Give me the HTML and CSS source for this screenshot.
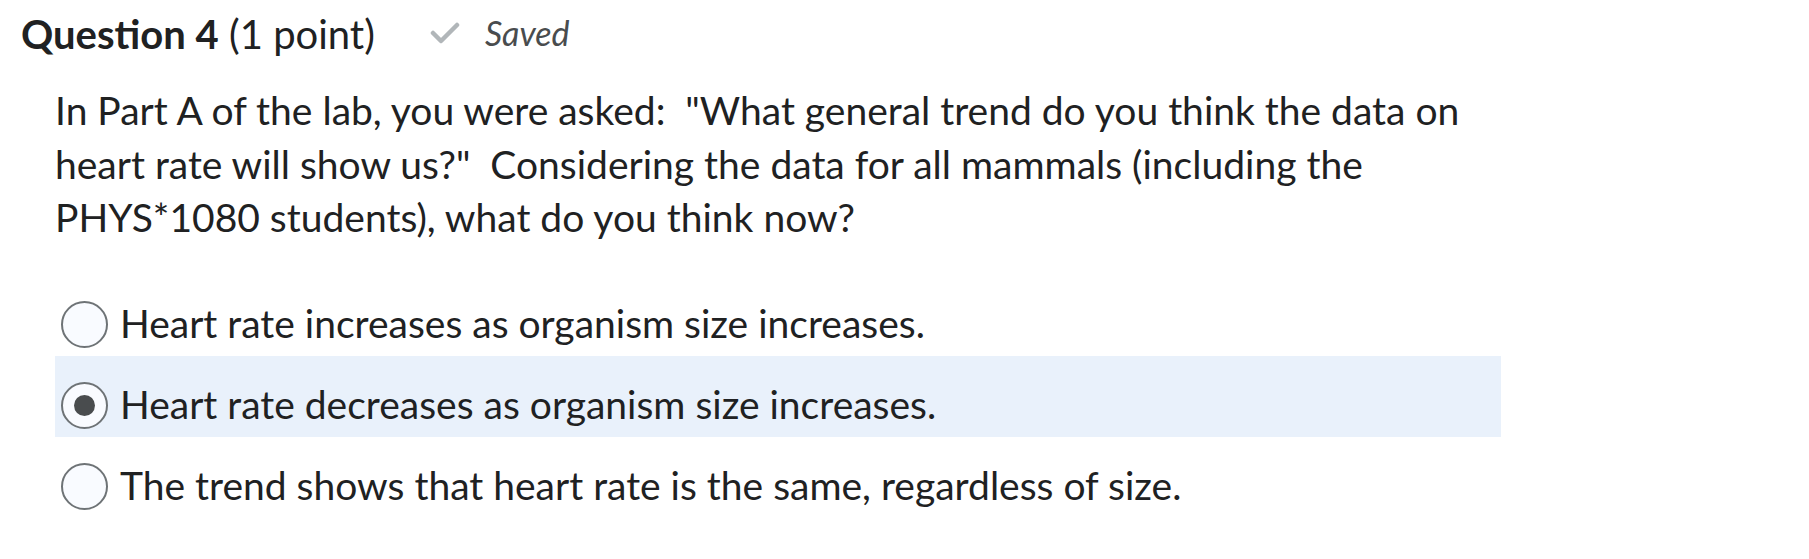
FILE: index.html
```html
<!DOCTYPE html>
<html lang="en">
<head>
<meta charset="utf-8">
<title>Question 4</title>
<link rel="stylesheet" href="styles.css">
</head>
<body>
<div class="question">
  <div class="header">
    <h2 class="title"><strong>Question 4</strong> (1 point)</h2>
    <svg class="check" width="30" height="22" viewBox="0 0 30 22" aria-hidden="true">
      <polyline points="3,11 11,19 27,3" fill="none" stroke="#b1b6b9" stroke-width="4.5" stroke-linecap="round" stroke-linejoin="round"/>
    </svg>
    <span class="saved">Saved</span>
  </div>
  <div class="body">
    <p class="prompt">In Part A of the lab, you were asked:&nbsp; "What general trend do you think the data on heart rate will show us?"&nbsp; Considering the data for all mammals (including the PHYS*1080 students), what do you think now?</p>
    <div class="options">
      <label class="option">
        <span class="radio"></span>
        <span class="label">Heart rate increases as organism size increases.</span>
      </label>
      <label class="option selected">
        <span class="radio checked"></span>
        <span class="label">Heart rate decreases as organism size increases.</span>
      </label>
      <label class="option">
        <span class="radio"></span>
        <span class="label">The trend shows that heart rate is the same, regardless of size.</span>
      </label>
    </div>
  </div>
</div>
</body>
</html>
```
FILE: styles.css
```css
* { box-sizing: border-box; }
html, body {
  margin: 0;
  padding: 0;
  background: #ffffff;
}
body {
  font-family: Lato, "Open Sans", sans-serif;
  color: #202122;
}
.question {
  padding-top: 10px;
}
.header {
  display: flex;
  align-items: center;
  padding-left: 21px;
  height: 48px;
}
.title {
  margin: 0;
  font-size: 40px;
  line-height: 48px;
  font-weight: 400;
  color: #202122;
}
.title strong {
  font-weight: 700;
}
.check {
  margin-left: 55px;
  margin-top: -2px;
}
.saved {
  margin-left: 25px;
  font-size: 34px;
  font-style: italic;
  color: #494c4e;
  margin-top: -4px;
}
.body {
  padding-left: 55px;
  width: 1501px;
}
.prompt {
  margin: 26px 0 0 0;
  font-size: 39px;
  line-height: 53.5px;
}
.options {
  margin-top: 30px;
  display: flex;
  flex-direction: column;
}
.option {
  display: flex;
  align-items: center;
  height: 81px;
  padding: 23px 0 5px 6px;
  font-size: 39px;
  line-height: 53.5px;
}
.option.selected {
  background: #e9f1fb;
}
.radio {
  flex: none;
  width: 47px;
  height: 47px;
  border: 2px solid #6e7376;
  border-radius: 50%;
  background: #f9fbff;
  display: flex;
  align-items: center;
  justify-content: center;
  margin-top: 0;
}
.radio.checked::after {
  content: "";
  width: 21px;
  height: 21px;
  border-radius: 50%;
  background: #494c4e;
}
.label {
  margin-left: 12px;
}
```
